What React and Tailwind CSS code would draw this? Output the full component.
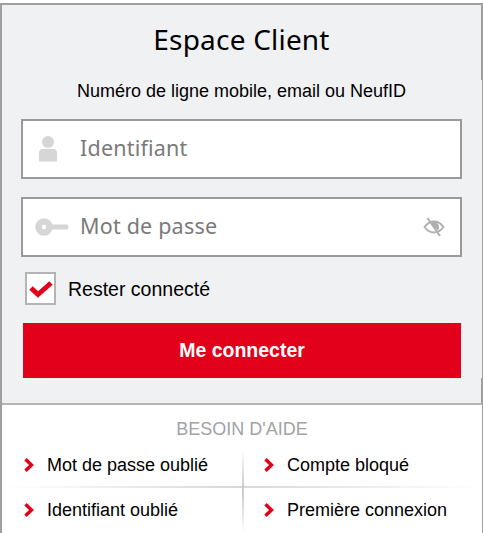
import React from 'react';

const SANS = "font-['Liberation_Sans',Arial,sans-serif]";
const BRAND = "font-['Noto_Sans',sans-serif]";

const UserIcon = () => (
  <svg width="20" height="26" viewBox="0 0 20 26" className="text-[#d6d6d6]" fill="currentColor">
    <circle cx="10" cy="6" r="6" />
    <path d="M1 25.5V16.5C1 14 3 13 5 13H15C17 13 19 14 19 16.5V25.5Z" />
  </svg>
);

const KeyIcon = () => (
  <svg width="34" height="18" viewBox="0 0 34 18" className="text-[#d6d6d6]" fill="none">
    <circle cx="9" cy="9" r="5.5" stroke="currentColor" strokeWidth="6.5" />
    <path d="M14 6.5H32C33 6.5 33.5 8 33.5 9C33.5 10 33 11.5 32 11.5H14Z" fill="currentColor" />
  </svg>
);

const EyeOffIcon = () => (
  <svg width="22" height="20" viewBox="0 0 22 20" fill="none" stroke="#b0b0b0" strokeWidth="1.8">
    <path d="M1.5 10C4 6.5 7 4.5 11 4.5C15 4.5 18 6.5 20.5 10C18 13.5 15 15.5 11 15.5C7 15.5 4 13.5 1.5 10Z" />
    <path d="M10 5A5 5 0 0 1 16 10.5C16 11.5 15.5 13 15 13.5L7.5 6.5C8.2 5.6 9 5.2 10 5Z" fill="#b0b0b0" stroke="none" />
    <path d="M4.5 1L17 19" strokeWidth="2" />
  </svg>
);

const Chevron = () => (
  <svg width="10" height="14" viewBox="0 0 10 14" fill="none" stroke="#e2001a" strokeWidth="3.4" className="shrink-0">
    <path d="M1.5 1.2L7.5 7L1.5 12.8" />
  </svg>
);

const Field = ({ icon, iconPad, label, right }) => (
  <div className="h-[60px] border-2 border-[#999a9c] bg-white flex items-center">
    <div className={`w-[57px] shrink-0 flex ${iconPad}`}>{icon}</div>
    <span className={`${BRAND} text-[21.5px] text-[#7a7a7a] tracking-[0.2px] flex-1 pb-[2px]`}>{label}</span>
    {right}
  </div>
);

const HelpLink = ({ label }) => (
  <a className="flex items-center h-[44px]">
    <Chevron />
    <span className="ml-[13px] text-[#000] text-[18px]">{label}</span>
  </a>
);

export default function App() {
  return (
    <div className={`${SANS} w-[483px] h-[533px] overflow-hidden bg-white pt-[3px]`}>
      <div className="h-[530px] border-l-2 border-r border-[#a0a0a0]">
        {/* Login panel */}
        <div className="relative h-[402px] bg-[#f0f1f3] border-t-2 border-b-2 border-t-[#a0a0a0] border-b-[#b5b5b5] pl-[19px] pr-[20px]">
          <div className="absolute right-0 top-[-2px] h-[77px] w-px bg-[#a0a0a0]" />
          <div className="absolute right-0 bottom-0 h-[25px] w-px bg-[#a0a0a0]" />
          <h1 className={`${BRAND} text-[28px] leading-[36px] text-black text-center mt-[16px] tracking-[0.2px]`}>Espace Client</h1>
          <p className="text-[18px] leading-[20px] text-black text-center mt-[24px]">Numéro de ligne mobile, email ou NeufID</p>
          <div className="mt-[18px] flex flex-col gap-[18px]">
            <Field icon={<UserIcon />} iconPad="pl-[15px]" label="Identifiant" />
            <Field
              icon={<KeyIcon />}
              iconPad="pl-[12px]"
              label="Mot de passe"
              right={<div className="pr-[15px] flex items-center"><EyeOffIcon /></div>}
            />
          </div>
          <label className="flex items-center mt-[15px] ml-[4px]">
            <span className="w-[31px] h-[33px] border-2 border-[#b4b4b4] bg-white flex items-center justify-center">
              <svg width="24" height="18" viewBox="0 0 24 18" fill="none" stroke="#e2001a" strokeWidth="5">
                <path d="M2 8L9 14.5L22 3" />
              </svg>
            </span>
            <span className="ml-[12px] text-[19.5px] leading-[24px] text-black">Rester connecté</span>
          </label>
          <button className="block w-[438px] h-[55px] ml-[2px] mt-[18px] bg-[#e2001a] text-white font-bold text-[19.5px] text-center">
            Me connecter
          </button>
        </div>

        {/* Aide */}
        <div>
          <div className="h-[38px] pt-[14px] text-center text-[18px] leading-[20px] text-[#a0a3a8]">BESOIN D'AIDE</div>
          <div className="relative grid grid-cols-2 h-[90px]">
            <div className="pl-[22px]"><HelpLink label="Mot de passe oublié" /></div>
            <div className="pl-[22px]"><HelpLink label="Compte bloqué" /></div>
            <div className="pl-[22px]"><HelpLink label="Identifiant oublié" /></div>
            <div className="pl-[22px]"><HelpLink label="Première connexion" /></div>
            <div className="absolute left-0 right-0 top-[43px] h-[2px] bg-gradient-to-r from-transparent via-[#d8d8d8] to-transparent" />
            <div className="absolute top-[6px] bottom-0 left-[240px] w-[2px] bg-gradient-to-b from-transparent via-[#c8c8c8] to-transparent" />
          </div>
        </div>
      </div>
    </div>
  );
}
